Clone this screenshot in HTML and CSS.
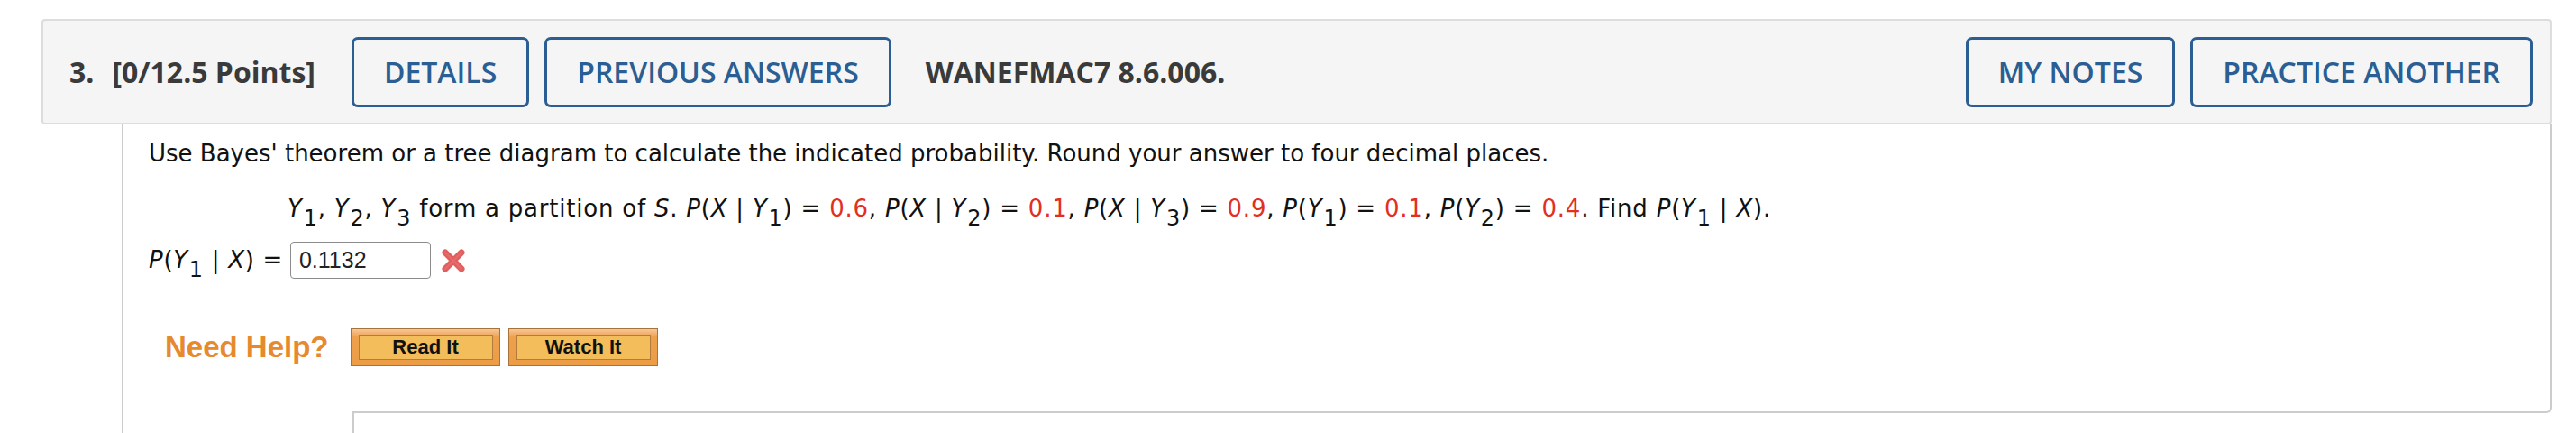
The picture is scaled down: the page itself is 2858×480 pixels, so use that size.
FILE: index.html
```html
<!DOCTYPE html>
<html lang="en">
<head>
<meta charset="utf-8">
<title>Question 3</title>
<link rel="stylesheet" href="styles.css">
</head>
<body>
<div class="question">
  <div class="qheader">
    <span class="qnum">3.</span>
    <span class="qpoints">[0/12.5 Points]</span>
    <button class="hbtn hbtn-first">DETAILS</button>
    <button class="hbtn">PREVIOUS ANSWERS</button>
    <span class="qcode">WANEFMAC7 8.6.006.</span>
    <span class="spacer"></span>
    <button class="hbtn">MY NOTES</button>
    <button class="hbtn">PRACTICE ANOTHER</button>
  </div>
  <div class="qbody">
    <div class="qcontent">
      <p class="intro">Use Bayes' theorem or a tree diagram to calculate the indicated probability. Round your answer to four decimal places.</p>
      <p class="formula"><i>Y</i><sub>1</sub>, <i>Y</i><sub>2</sub>, <i>Y</i><sub>3</sub> form a partition of <i>S</i>. <i>P</i>(<i>X</i> | <i>Y</i><sub>1</sub>) = <span class="red">0.6</span>, <i>P</i>(<i>X</i> | <i>Y</i><sub>2</sub>) = <span class="red">0.1</span>, <i>P</i>(<i>X</i> | <i>Y</i><sub>3</sub>) = <span class="red">0.9</span>, <i>P</i>(<i>Y</i><sub>1</sub>) = <span class="red">0.1</span>, <i>P</i>(<i>Y</i><sub>2</sub>) = <span class="red">0.4</span>. Find <i>P</i>(<i>Y</i><sub>1</sub> | <i>X</i>).</p>
      <div class="answer-row">
        <span class="answer-label"><i>P</i>(<i>Y</i><sub>1</sub> | <i>X</i>) =</span>
        <input class="answer-input" type="text" value="0.1132">
        <svg class="wrong" width="28" height="28" viewBox="0 0 28 28" aria-label="incorrect">
          <path d="M5 5 L23 23 M23 5 L5 23" stroke="#e35f5f" stroke-width="7" stroke-linecap="round" fill="none"/>
          <path d="M5 5 L23 23 M23 5 L5 23" stroke="#ea7a7a" stroke-width="2" stroke-linecap="round" fill="none" opacity="0.5"/>
        </svg>
      </div>
      <div class="help-row">
        <span class="need-help">Need Help?</span>
        <button class="help-btn"><span class="help-inner">Read It</span></button>
        <button class="help-btn"><span class="help-inner">Watch It</span></button>
      </div>
    </div>
    <div class="qend">
      <div class="qend-gap"></div>
      <div class="qend-edge"></div>
    </div>
    <div class="qfooter"></div>
  </div>
</div>
</body>
</html>
```
FILE: styles.css
```css
html, body {
  margin: 0;
  padding: 0;
  background: #ffffff;
}

body {
  overflow: hidden;
}

.question {
  width: 2785px;
  margin: 21px 0 0 46px;
}

.qheader {
  box-sizing: border-box;
  height: 117px;
  display: flex;
  align-items: center;
  padding: 0 19px 0 29px;
  background: #f5f5f5;
  border: 2px solid #dddddd;
  border-radius: 4px;
  font-family: "Open Sans", "Liberation Sans", sans-serif;
  font-size: 32px;
  font-weight: 700;
  color: #3a3a3a;
}

.qnum {
  margin-right: 20px;
}

.qcode {
  margin-left: 38px;
}

.spacer {
  flex: 1;
}

.hbtn {
  box-sizing: border-box;
  height: 78px;
  margin-left: 17px;
  padding: 0 33px;
  background: transparent;
  border: 3px solid #2b5e92;
  border-radius: 7px;
  font-family: "Open Sans", "Liberation Sans", sans-serif;
  font-size: 32px;
  font-weight: 600;
  color: #2b5e92;
  line-height: 1;
}

.hbtn-first {
  margin-left: 40px;
}

.qbody {
  margin-left: 89px;
  border-left: 2px solid #cccccc;
}

.qcontent {
  border-right: 2px solid #cccccc;
  padding: 17px 0 24px 28px;
  font-family: "DejaVu Sans", Verdana, sans-serif;
  font-size: 26px;
  line-height: 30px;
  color: #111111;
}

.qcontent p {
  margin: 0;
}

.formula {
  margin-top: 31px !important;
  margin-left: 154px !important;
  letter-spacing: 0.78px;
}

sub {
  font-size: 0.92em;
  vertical-align: -0.42em;
  line-height: 0;
  margin-left: 1px;
}

.red {
  color: #e2301f;
}

.answer-row {
  display: flex;
  align-items: baseline;
  margin-top: 22px;
}

.answer-label {
  margin-right: 8px;
  letter-spacing: 0.7px;
}

.answer-input {
  box-sizing: border-box;
  width: 156px;
  height: 41px;
  padding: 0 9px;
  border: 1px solid #8c8c8c;
  border-radius: 4px;
  font-family: "Liberation Sans", Arial, sans-serif;
  font-size: 25px;
  color: #222222;
  background: #ffffff;
}

.wrong {
  align-self: center;
  margin-left: 11px;
}

.help-row {
  display: flex;
  align-items: center;
  margin-top: 55px;
  padding-left: 18px;
}

.need-help {
  font-family: "Liberation Sans", Arial, sans-serif;
  font-weight: 700;
  font-size: 33px;
  line-height: 38px;
  color: #e68a2e;
  margin-right: 24px;
}

.help-btn {
  box-sizing: border-box;
  width: 166px;
  height: 42px;
  margin-right: 9px;
  padding: 6px 7px 6px 8px;
  border: 1px solid #a8733a;
  background: linear-gradient(#f6c89a 0%, #eea04c 22%, #ec9c45 100%);
  display: flex;
}

.help-inner {
  flex: 1;
  display: flex;
  align-items: center;
  justify-content: center;
  border: 1px solid #b27b40;
  background: #f2bd5a;
  font-family: "Liberation Sans", Arial, sans-serif;
  font-weight: 700;
  font-size: 22px;
  color: #111111;
}

.qend {
  display: flex;
  height: 28px;
}

.qend-gap {
  width: 254px;
}

.qend-edge {
  flex: 1;
  border-right: 2px solid #cccccc;
  border-bottom: 2px solid #cccccc;
  border-bottom-right-radius: 6px;
}

.qfooter {
  margin-left: 254px;
  height: 60px;
  border-left: 2px solid #cccccc;
}
```
